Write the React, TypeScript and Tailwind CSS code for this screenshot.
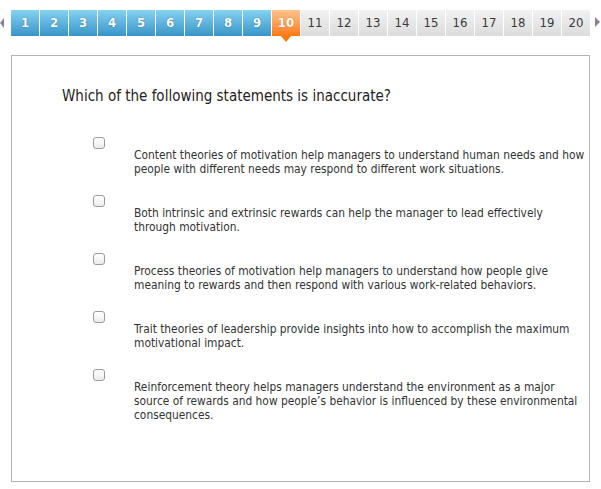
import React from "react";

const options = [
  [
    "Content theories of motivation help managers to understand human needs and how",
    "people with different needs may respond to different work situations.",
  ],
  [
    "Both intrinsic and extrinsic rewards can help the manager to lead effectively",
    "through motivation.",
  ],
  [
    "Process theories of motivation help managers to understand how people give",
    "meaning to rewards and then respond with various work-related behaviors.",
  ],
  [
    "Trait theories of leadership provide insights into how to accomplish the maximum",
    "motivational impact.",
  ],
  [
    "Reinforcement theory helps managers understand the environment as a major",
    "source of rewards and how people\u2019s behavior is influenced by these environmental",
    "consequences.",
  ],
];

function Tab({ n, current }: { n: number; current: number }) {
  if (n === current) {
    return (
      <div className="relative flex h-[26px] w-[28px] items-center justify-center bg-gradient-to-b from-[#ffc48a] to-[#ff7800] text-[13px] font-bold text-white [text-shadow:0_0_1px_rgba(120,50,0,0.6)]">
        {n}
        <div className="absolute left-1/2 top-full -translate-x-1/2 border-x-[5px] border-t-[6px] border-x-transparent border-t-[#ff7800]" />
      </div>
    );
  }
  if (n < current) {
    return (
      <div className="flex h-[26px] w-[28px] items-center justify-center bg-gradient-to-b from-[#84d2f2] to-[#3795c8] text-[13px] font-bold text-white [text-shadow:0_0_1px_rgba(0,50,90,0.7)]">
        {n}
      </div>
    );
  }
  return (
    <div className="flex h-[26px] w-[28px] items-center justify-center bg-gradient-to-b from-[#f2f2f2] to-[#dcdcdc] text-[13px] text-[#3a3a3a]">
      {n}
    </div>
  );
}

export default function App() {
  const current = 10;
  return (
    <div className="h-[489px] w-[601px] bg-white font-['DejaVu_Sans_Condensed','Liberation_Sans',sans-serif]">
      {/* pager */}
      <div className="flex items-start pt-[10px]">
        <div className="flex w-[11px] pt-[8px]">
          <div className="border-y-[5px] border-r-[4px] border-y-transparent border-r-[#8c7f98]" />
        </div>
        <div className="flex gap-px">
          {Array.from({ length: 20 }, (_, i) => (
            <Tab key={i} n={i + 1} current={current} />
          ))}
        </div>
        <div className="flex pl-[5px] pt-[7px]">
          <div className="border-y-[5px] border-l-[5px] border-y-transparent border-l-[#8c7f98]" />
        </div>
      </div>

      {/* question panel */}
      <div className="ml-[11px] mt-[19px] h-[427px] w-[579px] border border-[#b3b3b3] pt-[31px]">
        <h2 className="pl-[50px] text-[15px] leading-[18px] text-[#222]">
          Which of the following statements is inaccurate?
        </h2>
        <div className="mt-[32px] flex flex-col gap-[19px]">
          {options.map((lines, i) => (
            <div key={i}>
              <div className="h-[11px] pl-[81px]">
                <div className="h-[12px] w-[12px] rounded-[3px] border border-[#9a9a9a] bg-gradient-to-b from-white to-[#ececec]" />
              </div>
              <p className="pl-[122px] text-[11.85px] leading-[14px] text-[#333]">
                {lines.map((l, j) => (
                  <span key={j} className="block whitespace-nowrap">
                    {l}
                  </span>
                ))}
              </p>
            </div>
          ))}
        </div>
      </div>
    </div>
  );
}
